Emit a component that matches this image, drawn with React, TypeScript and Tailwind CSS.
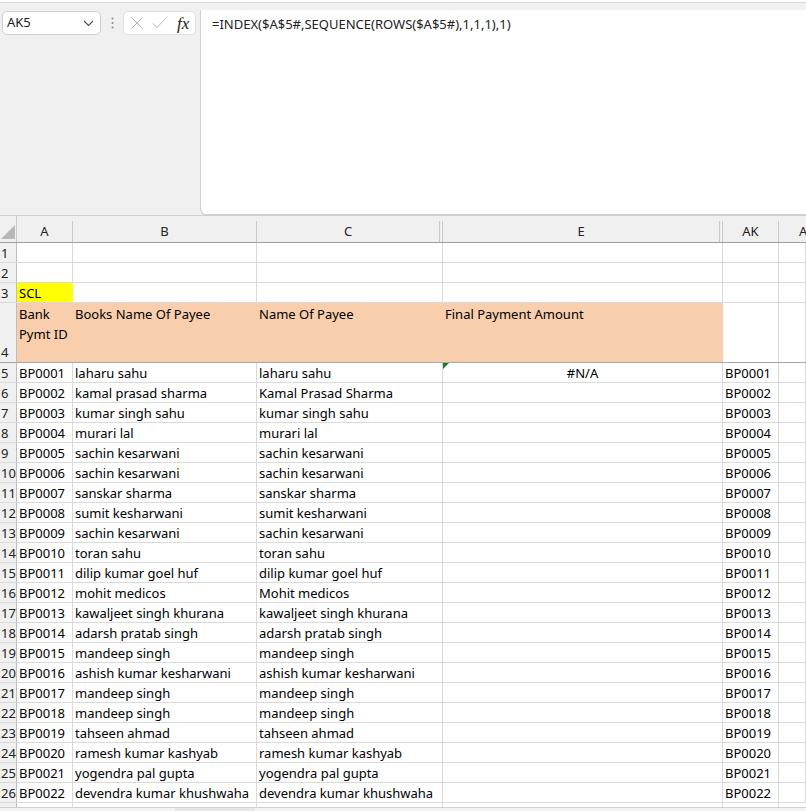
import React from "react";

const rows: [string, string, string][] = [
  ["BP0001", "laharu sahu", "laharu sahu"],
  ["BP0002", "kamal prasad sharma", "Kamal Prasad Sharma"],
  ["BP0003", "kumar singh sahu", "kumar singh sahu"],
  ["BP0004", "murari lal", "murari lal"],
  ["BP0005", "sachin kesarwani", "sachin kesarwani"],
  ["BP0006", "sachin kesarwani", "sachin kesarwani"],
  ["BP0007", "sanskar sharma", "sanskar sharma"],
  ["BP0008", "sumit kesharwani", "sumit kesharwani"],
  ["BP0009", "sachin kesarwani", "sachin kesarwani"],
  ["BP0010", "toran sahu", "toran sahu"],
  ["BP0011", "dilip kumar goel huf", "dilip kumar goel huf"],
  ["BP0012", "mohit medicos", "Mohit medicos"],
  ["BP0013", "kawaljeet singh khurana", "kawaljeet singh khurana"],
  ["BP0014", "adarsh pratab singh", "adarsh pratab singh"],
  ["BP0015", "mandeep singh", "mandeep singh"],
  ["BP0016", "ashish kumar kesharwani", "ashish kumar kesharwani"],
  ["BP0017", "mandeep singh", "mandeep singh"],
  ["BP0018", "mandeep singh", "mandeep singh"],
  ["BP0019", "tahseen ahmad", "tahseen ahmad"],
  ["BP0020", "ramesh kumar kashyab", "ramesh kumar kashyab"],
  ["BP0021", "yogendra pal gupta", "yogendra pal gupta"],
  ["BP0022", "devendra kumar khushwaha", "devendra kumar khushwaha"],
];

function RowNum({ n, tall }: { n: number | string; tall?: boolean }) {
  return (
    <div
      className={
        "w-[17px] shrink-0 bg-[#f0f0f0] border-r border-[#bdbdbd] flex pl-[1px] pt-[2px] overflow-visible whitespace-nowrap text-[#222] " +
        (tall ? "items-end" : "items-center")
      }
    >
      {n}
    </div>
  );
}

function HeaderCell({ label, w }: { label: string; w: string }) {
  return (
    <div className={w + " shrink-0 h-full flex items-end"}>
      <div className="w-full h-[21px] flex items-center justify-center pt-[1px] border-r border-[#c8c8c8] text-[#222]">
        {label}
      </div>
    </div>
  );
}

function DataRow({
  n,
  a,
  b,
  c,
  e,
  ak,
  aFill,
}: {
  n: number;
  a?: string;
  b?: string;
  c?: string;
  e?: React.ReactNode;
  ak?: string;
  aFill?: boolean;
}) {
  const cell = "shrink-0 h-full border-r border-[#dadada] px-[2px] pt-[2px] flex items-center overflow-hidden whitespace-nowrap";
  return (
    <div className="flex h-[20px] shrink-0 border-b border-[#dadada] bg-white">
      <RowNum n={n} />
      <div className={"w-[56px] " + cell + (aFill ? " bg-[#ffff00] border-[#ffff00]" : "")}>{a}</div>
      <div className={"w-[184px] " + cell}>{b}</div>
      <div className={"w-[186px] " + cell}>{c}</div>
      <div className={"w-[280px] " + cell + " relative justify-center"}>{e}</div>
      <div className={"w-[56px] " + cell}>{ak}</div>
      <div className={"flex-1 " + cell}></div>
    </div>
  );
}

export default function App() {
  return (
    <div
      className="w-[806px] h-[811px] overflow-hidden bg-[#f0f0f0] text-[13px] text-black flex flex-col"
      style={{ fontFamily: '"Noto Sans", "Open Sans", sans-serif' }}
    >
      {/* ribbon edge */}
      <div className="h-[3px] bg-white border-b border-[#d6d6d6] shrink-0" />

      {/* formula bar */}
      <div className="flex h-[212px] shrink-0">
        <div className="w-[200px] shrink-0 flex items-start pt-[8px] pl-[2px]">
          <div className="w-[99px] h-[24px] bg-white border border-[#cfcfcf] rounded-[5px] flex items-center justify-between pl-[4px] pr-[6px]">
            <span className="text-[13px] text-[#222]">AK5</span>
            <svg width="11" height="7" viewBox="0 0 11 7">
              <path d="M1 1 L5.5 5.5 L10 1" fill="none" stroke="#555" strokeWidth="1.2" />
            </svg>
          </div>
          <div className="w-[22px] h-[24px] flex items-center justify-center">
            <svg width="3" height="12" viewBox="0 0 3 12">
              <circle cx="1.5" cy="1.5" r="1" fill="#8a8a8a" />
              <circle cx="1.5" cy="6" r="1" fill="#8a8a8a" />
              <circle cx="1.5" cy="10.5" r="1" fill="#8a8a8a" />
            </svg>
          </div>
          <div className="w-[73px] h-[24px] bg-white border border-[#e0e0e0] rounded-[5px] flex items-center pl-[6px]">
            <svg width="14" height="14" viewBox="0 0 14 14">
              <path d="M1.5 1.5 L12.5 12.5 M12.5 1.5 L1.5 12.5" stroke="#b5b5b5" strokeWidth="1" fill="none" />
            </svg>
            <svg width="15" height="14" viewBox="0 0 15 14" className="ml-[8px]">
              <path d="M1 7.5 L5 11.5 L14 2" stroke="#b5b5b5" strokeWidth="1" fill="none" />
            </svg>
            <span
              className="ml-[10px] text-[17px] italic text-[#222] leading-none"
              style={{ fontFamily: '"Liberation Serif", serif' }}
            >
              fx
            </span>
          </div>
        </div>
        <div className="flex-1 mt-[7px] bg-white border-l border-b border-[#cfcfcf] rounded-bl-[6px] pl-[11px] pt-[5px]">
          <span className="text-[13px] text-[#222]">=INDEX($A$5#,SEQUENCE(ROWS($A$5#),1,1,1),1)</span>
        </div>
      </div>

      {/* column headers */}
      <div className="flex h-[28px] shrink-0 border-t border-[#d0d0d0] border-b border-b-[#9e9e9e] bg-[#f0f0f0]">
        <div className="w-[17px] shrink-0 h-full flex items-end border-r border-[#c8c8c8]">
          <svg width="16" height="16" viewBox="0 0 16 16" className="mb-[2px]">
            <path d="M15 1 L15 15 L1 15 Z" fill="#b7b7b7" />
          </svg>
        </div>
        <HeaderCell label="A" w="w-[56px]" />
        <HeaderCell label="B" w="w-[184px]" />
        <HeaderCell label="C" w="w-[183px]" />
        <HeaderCell label="" w="w-[3px]" />
        <HeaderCell label="E" w="w-[277px]" />
        <HeaderCell label="" w="w-[3px]" />
        <HeaderCell label="AK" w="w-[56px]" />
        <div className="flex-1 h-full flex items-end overflow-hidden">
          <div className="h-[21px] flex items-center pt-[1px] pl-[20px] text-[#222]">A</div>
        </div>
      </div>

      {/* rows 1-3 */}
      <DataRow n={1} />
      <DataRow n={2} />
      <DataRow n={3} a="SCL" aFill />

      {/* row 4 */}
      <div className="flex h-[60px] border-b border-[#a6a6a6] shrink-0 bg-white">
        <RowNum n={4} tall />
        <div className="w-[706px] shrink-0 bg-[#f8cead] flex leading-[20px] pt-[1px]">
          <div className="w-[56px] shrink-0 px-[2px] whitespace-normal">Bank Pymt ID</div>
          <div className="w-[184px] shrink-0 px-[2px] whitespace-nowrap">Books Name Of Payee</div>
          <div className="w-[186px] shrink-0 px-[2px] whitespace-nowrap">Name Of Payee</div>
          <div className="w-[280px] shrink-0 px-[2px] whitespace-nowrap">Final Payment Amount</div>
        </div>
        <div className="w-[56px] shrink-0 border-r border-[#dadada]" />
        <div className="flex-1 border-r border-[#dadada]" />
      </div>

      {/* data rows */}
      {rows.map((r, i) => (
        <DataRow
          key={r[0]}
          n={i + 5}
          a={r[0]}
          b={r[1]}
          c={r[2]}
          ak={r[0]}
          e={
            i === 0 ? (
              <>
                <svg width="6" height="6" viewBox="0 0 6 6" className="absolute left-0 top-0">
                  <path d="M0 0 L6 0 L0 6 Z" fill="#1e7a1e" />
                </svg>
                <span>#N/A</span>
              </>
            ) : undefined
          }
        />
      ))}

      {/* partial row 27 */}
      <div className="flex h-[4px] shrink-0 bg-white">
        <div className="w-[17px] shrink-0 bg-[#f0f0f0] border-r border-[#bdbdbd]" />
        <div className="w-[56px] shrink-0 border-r border-[#dadada]" />
        <div className="w-[184px] shrink-0 border-r border-[#dadada]" />
        <div className="w-[186px] shrink-0 border-r border-[#dadada]" />
        <div className="w-[280px] shrink-0 border-r border-[#dadada]" />
        <div className="w-[56px] shrink-0 border-r border-[#dadada]" />
        <div className="flex-1" />
      </div>
      <div className="flex-1 flex bg-[#e6e6e6] border-t border-[#d0d0d0]">
        <div className="w-[175px] bg-[#f3f3f3]" />
        <div className="w-[80px]" />
        <div className="flex-1 bg-[#f3f3f3]" />
      </div>
    </div>
  );
}
